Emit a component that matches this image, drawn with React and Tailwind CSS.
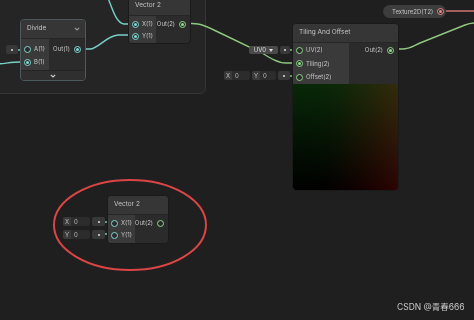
import React from 'react';

// port colours per slot type
const RING = {
  teal: 'border-[#7fd8d4]',
  green: 'border-[#8fd88a]',
  pink: 'border-[#f08a8a]',
};
const FILL = {
  teal: 'bg-[#7fd8d4]',
  green: 'bg-[#8fd88a]',
  pink: 'bg-[#f08a8a]',
};

function Port({ type, connected }) {
  return (
    <span className={`flex h-[7px] w-[7px] shrink-0 items-center justify-center rounded-full border ${RING[type]} bg-[#2a2a2a]`}>
      {connected && <span className={`h-[3px] w-[3px] rounded-full ${FILL[type]}`} />}
    </span>
  );
}

function InRow({ label, type, connected }) {
  return (
    <div className="flex h-[12px] items-center gap-[3px] pl-[3px]">
      <Port type={type} connected={connected} />
      <span className="leading-none">{label}</span>
    </div>
  );
}

function OutRow({ label, type, connected }) {
  return (
    <div className="flex h-[12px] items-center justify-end gap-[4px] pr-[4px]">
      <span className="leading-none">{label}</span>
      <Port type={type} connected={connected} />
    </div>
  );
}

function Chevron({ className }) {
  return (
    <svg viewBox="0 0 6 4" className={className} fill="none" stroke="currentColor" strokeWidth="1.1">
      <path d="M0.8 0.8 L3 3 L5.2 0.8" />
    </svg>
  );
}

function Field({ label, value, className }) {
  return (
    <div className={`absolute flex h-[9px] items-stretch overflow-hidden rounded-[2px] bg-[#2c2c2c] text-[6px] leading-none text-[#bdbdbd] ${className}`}>
      <span className="flex w-[8px] items-center justify-center bg-[#3a3a3a]">{label}</span>
      <span className="flex items-center pl-[3px]">{value}</span>
    </div>
  );
}

function DotBox({ className }) {
  return (
    <div className={`absolute flex h-[9px] items-center justify-center rounded-[2px] bg-[#383838] ${className}`}>
      <span className="h-[2px] w-[2px] rounded-full bg-[#e0e0e0]" />
    </div>
  );
}

function Wires() {
  return (
    <svg className="pointer-events-none absolute inset-0" width="474" height="320" fill="none" strokeWidth="1.4">
      {/* vector1 wires */}
      <path d="M108 -2 C 112 8, 116 23, 124 24 L 131 24" stroke="#79cfc9" />
      <path d="M80 49 L 90 49 C 98 49, 106 36, 118 35 L 131 35" stroke="#79cfc9" />
      <path d="M-2 64 C 8 63, 14 62, 20 62 L 27 62" stroke="#79cfc9" />
      <path d="M15 50 L 27 50" stroke="#79cfc9" />
      <path d="M100 222 L 112 222" stroke="#79cfc9" />
      <path d="M100 234 L 112 234" stroke="#79cfc9" />
      {/* vector2 wires */}
      <path d="M186 23 L 198 24 C 204 25, 210 28, 216 31 L 262 53 C 270 58, 278 63, 286 63 L 297 63" stroke="#8fc77f" />
      <path d="M392 49 L 402 49 C 410 49, 413 46, 420 43 L 465 25 C 469 23.5, 472 23, 476 23" stroke="#8fc77f" />
      <path d="M287 50 L 297 50" stroke="#8fc77f" />
      <path d="M287 76 L 297 76" stroke="#8fc77f" />
      {/* texture wire */}
      <path d="M446 11 L 476 11" stroke="#e07a7a" />
    </svg>
  );
}

export default function App() {
  return (
    <div className="relative h-[320px] w-[474px] overflow-hidden bg-[#1f1f1f] font-['Inter','Noto_Sans',sans-serif] text-[6px] text-[#c4c4c4]">
      {/* group frame */}
      <div className="absolute -left-[10px] -top-[10px] h-[104px] w-[216px] rounded-[6px] border border-[#363636] bg-[#252525]" />

      <Wires />

      {/* Divide */}
      <div className="absolute left-[20px] top-[19px] flex w-[66px] flex-col overflow-hidden rounded-[4px] border border-[#4d5a60] bg-[#2b2b2b]">
        <div className="flex h-[18px] items-center justify-between bg-[#363636] pl-[6px] pr-[5px] text-[6.5px]">
          <span>Divide</span>
          <Chevron className="h-[4px] w-[6px] text-[#9a9a9a]" />
        </div>
        <div className="flex h-[32px] border-t border-[#262626]">
          <div className="flex w-[28px] flex-col gap-[1px] bg-[#3a3a3a] pt-[4px]">
            <InRow label="A(1)" type="teal" />
            <InRow label="B(1)" type="teal" connected />
          </div>
          <div className="flex flex-1 flex-col pt-[4px]">
            <OutRow label="Out(1)" type="teal" connected />
          </div>
        </div>
        <div className="flex h-[10px] items-center justify-center border-t border-[#242424] bg-[#2f2f2f]">
          <Chevron className="h-[4px] w-[6px] text-[#d0d0d0]" />
        </div>
      </div>
      <Field label="" value="" className="-left-[20px] top-[45px] w-[20px]" />
      <DotBox className="left-[6px] top-[45px] w-[12px]" />

      {/* Vector 2 (top) */}
      <div className="absolute left-[128px] -top-[4px] flex w-[63px] flex-col overflow-hidden rounded-[4px] border border-[#1a1a1a] bg-[#2b2b2b]">
        <div className="flex h-[18px] items-center bg-[#363636] pl-[6px] text-[6.5px]">Vector 2</div>
        <div className="flex h-[28px] border-t border-[#262626]">
          <div className="flex w-[27px] flex-col bg-[#3a3a3a] pt-[2px]">
            <InRow label="X(1)" type="teal" connected />
            <InRow label="Y(1)" type="teal" connected />
          </div>
          <div className="flex flex-1 flex-col pt-[2px]">
            <OutRow label="Out(2)" type="green" connected />
          </div>
        </div>
      </div>

      {/* Texture2D property pill */}
      <div className="absolute left-[383px] top-[5px] flex h-[13px] w-[63px] items-center gap-[4px] rounded-full bg-[#3d3d3d] pl-[5px] pr-[2px] text-[6px]">
        <span className="h-[2px] w-[2px] rounded-full bg-[#e0e0e0]" />
        <span className="flex-1 leading-none">Texture2D(T2)</span>
        <Port type="pink" connected />
      </div>

      {/* Tiling And Offset */}
      <div className="absolute left-[292px] top-[23px] flex w-[107px] flex-col overflow-hidden rounded-[4px] border border-[#1a1a1a] bg-[#2b2b2b]">
        <div className="flex h-[18px] items-center bg-[#363636] pl-[6px] text-[6.5px]">Tiling And Offset</div>
        <div className="flex h-[42px] border-t border-[#262626]">
          <div className="flex w-[56px] flex-col gap-[1.5px] bg-[#3a3a3a] pt-[1px]">
            <InRow label="UV(2)" type="green" />
            <InRow label="Tiling(2)" type="green" connected />
            <InRow label="Offset(2)" type="green" />
          </div>
          <div className="flex flex-1 flex-col pt-[1px]">
            <OutRow label="Out(2)" type="green" connected />
          </div>
        </div>
        <div className="relative h-[106px] overflow-hidden rounded-b-[3px] bg-linear-to-r from-[#000000] to-[#2c0404]">
          <div className="absolute inset-0 bg-linear-to-b from-[#082808] to-transparent mix-blend-screen" />
        </div>
      </div>
      <div className="absolute left-[249px] top-[46px] flex h-[8px] w-[29px] items-center justify-center gap-[3px] rounded-[2px] bg-[#4a4a4a] text-[6px] leading-none text-[#dedede]">
        <span>UV0</span>
        <svg viewBox="0 0 4 3" className="h-[3px] w-[4px] fill-[#dedede]"><path d="M0 0 H4 L2 3 Z" /></svg>
      </div>
      <DotBox className="left-[280px] top-[46px] w-[10px] !h-[8px]" />
      <Field label="X" value="0" className="left-[224px] top-[71px] w-[26px]" />
      <Field label="Y" value="0" className="left-[252px] top-[71px] w-[24px]" />
      <DotBox className="left-[278px] top-[71px] w-[12px]" />

      {/* Vector 2 (circled) */}
      <div className="absolute left-[107px] top-[195px] flex w-[62px] flex-col overflow-hidden rounded-[4px] border border-[#1a1a1a] bg-[#2b2b2b]">
        <div className="flex h-[18px] items-center bg-[#363636] pl-[6px] text-[6.5px]">Vector 2</div>
        <div className="flex h-[29px] border-t border-[#262626]">
          <div className="flex w-[28px] flex-col bg-[#3a3a3a] pt-[2px]">
            <InRow label="X(1)" type="teal" />
            <InRow label="Y(1)" type="teal" />
          </div>
          <div className="flex flex-1 flex-col pt-[2px]">
            <OutRow label="Out(2)" type="green" />
          </div>
        </div>
      </div>
      <Field label="X" value="0" className="left-[63px] top-[217px] w-[27px]" />
      <DotBox className="left-[92px] top-[217px] w-[13px]" />
      <Field label="Y" value="0" className="left-[63px] top-[230px] w-[27px]" />
      <DotBox className="left-[92px] top-[230px] w-[13px]" />

      {/* red annotation ring */}
      <svg className="pointer-events-none absolute inset-0" width="474" height="320" fill="none">
        <ellipse cx="130" cy="225" rx="76" ry="45" stroke="#dc4545" strokeWidth="2" />
      </svg>

      <div className="absolute left-[397px] top-[302px] font-['Inter','Noto_Sans_CJK_SC',sans-serif] text-[8.5px] leading-[11px] text-[#c8c8c8]">
        CSDN @青春666
      </div>
    </div>
  );
}
